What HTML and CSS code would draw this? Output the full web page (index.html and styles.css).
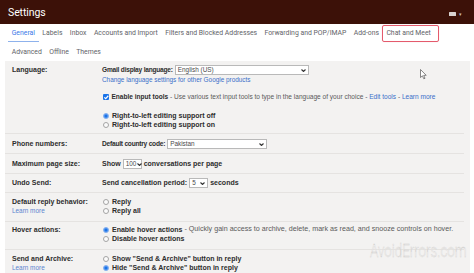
FILE: index.html
```html
<!DOCTYPE html>
<html>
<head>
<meta charset="utf-8">
<link rel="stylesheet" href="styles.css">
</head>
<body>
<header class="header">
  <span class="title">Settings</span>
  <span class="kbd"><span class="kbd-key"></span><span class="kbd-arrow">▾</span></span>
</header>
<nav class="tabs">
  <div class="tab-row">
    <span class="tab active">General</span>
    <span class="tab">Labels</span>
    <span class="tab">Inbox</span>
    <span class="tab">Accounts and Import</span>
    <span class="tab">Filters and Blocked Addresses</span>
    <span class="tab">Forwarding and POP/IMAP</span>
    <span class="tab">Add-ons</span>
    <span class="tab marked">Chat and Meet</span>
  </div>
  <div class="tab-row second">
    <span class="tab">Advanced</span>
    <span class="tab">Offline</span>
    <span class="tab">Themes</span>
  </div>
</nav>
<main class="panel">
  <section class="row row-lang">
    <div class="label">Language:</div>
    <div class="value">
      <div class="line"><b class="tight">Gmail display language:</b><span class="select sel-lang"><span>English (US)</span><svg class="chev" viewBox="0 0 5 3"><path d="M0.5 0.5 L2.5 2.5 L4.5 0.5"/></svg></span></div>
      <div class="line"><a class="link small">Change language settings for other Google products</a></div>
      <div class="line gap-check input-tools"><span class="check"><svg viewBox="0 0 6 6"><path d="M1.2 3.1 L2.5 4.3 L4.9 1.6"/></svg></span><b>Enable input tools</b><span class="muted">&nbsp;- Use various text input tools to type in the language of your choice -&nbsp;</span><a class="link">Edit tools</a><span class="muted">&nbsp;-&nbsp;</span><a class="link">Learn more</a></div>
      <div class="line9 gap-radio"><span class="radio on"></span><b>Right-to-left editing support off</b></div>
      <div class="line9"><span class="radio"></span><b>Right-to-left editing support on</b></div>
    </div>
  </section>
  <section class="row row-single">
    <div class="label">Phone numbers:</div>
    <div class="value"><div class="line"><b class="tight">Default country code:</b><span class="select sel-country"><span>Pakistan</span><svg class="chev" viewBox="0 0 5 3"><path d="M0.5 0.5 L2.5 2.5 L4.5 0.5"/></svg></span></div></div>
  </section>
  <section class="row row-single">
    <div class="label">Maximum page size:</div>
    <div class="value"><div class="line"><b>Show</b><span class="select sel-small"><span>100</span><svg class="chev" viewBox="0 0 5 3"><path d="M0.5 0.5 L2.5 2.5 L4.5 0.5"/></svg></span><b>conversations per page</b></div></div>
  </section>
  <section class="row row-undo">
    <div class="label">Undo Send:</div>
    <div class="value"><div class="line"><b>Send cancellation period:</b><span class="select sel-small"><span>5</span><svg class="chev" viewBox="0 0 5 3"><path d="M0.5 0.5 L2.5 2.5 L4.5 0.5"/></svg></span><b>seconds</b></div></div>
  </section>
  <section class="row row-reply">
    <div class="label"><div class="line9">Default reply behavior:</div><div class="line9"><a class="link light">Learn more</a></div></div>
    <div class="value">
      <div class="line9"><span class="radio"></span><b>Reply</b></div>
      <div class="line9"><span class="radio"></span><b>Reply all</b></div>
    </div>
  </section>
  <section class="row row-hover">
    <div class="label"><div class="line9">Hover actions:</div></div>
    <div class="value">
      <div class="line9"><span class="radio on"></span><b>Enable hover actions</b><span class="muted wide">&nbsp;- Quickly gain access to archive, delete, mark as read, and snooze controls on hover.</span></div>
      <div class="line9"><span class="radio"></span><b>Disable hover actions</b></div>
    </div>
  </section>
  <section class="row row-archive">
    <div class="label"><div class="line9">Send and Archive:</div><div class="line9"><a class="link light">Learn more</a></div></div>
    <div class="value">
      <div class="line9"><span class="radio"></span><b>Show "Send &amp; Archive" button in reply</b></div>
      <div class="line9"><span class="radio on"></span><b>Hide "Send &amp; Archive" button in reply</b></div>
    </div>
  </section>
  <svg class="cursor" viewBox="0 0 7 11"><path d="M0.5 0.5 L0.5 8.5 L2.4 6.8 L3.8 9.8 L5 9.3 L3.7 6.4 L6.2 6.3 Z"/></svg>
  <div class="watermark">AvoidErrors.com</div>
</main>
</body>
</html>
```
FILE: styles.css
```css
* { box-sizing: border-box; }
html, body { margin: 0; padding: 0; }
body {
  width: 474px;
  height: 273px;
  overflow: hidden;
  background: #fff;
  font-family: "Liberation Sans", Arial, sans-serif;
  font-size: 7px;
  color: #202124;
}
.header {
  height: 24px;
  background: #3c1108;
  display: flex;
  align-items: center;
  justify-content: space-between;
  padding: 0 10px 0 8px;
}
.title {
  font-family: Roboto, "Noto Sans", sans-serif;
  font-size: 10.5px;
  color: #fff;
  letter-spacing: -0.1px;
}
.kbd { display: flex; align-items: center; gap: 3px; margin-top: 3px; margin-right: 2px; }
.kbd-key { width: 7px; height: 4px; background: #d8d2d0; border-radius: 0.5px; }
.kbd-arrow { color: #cbbcb8; font-size: 5px; }

.tabs { font-family: Roboto, "Noto Sans", sans-serif; font-size: 6.85px; color: #5f6368; }
.tab-row { display: flex; height: 18px; padding-left: 8px; }
.tab-row.second { height: 18px; }
.tab {
  display: flex;
  align-items: center;
  padding: 1px 3.7px 0;
  border-bottom: 1.5px solid transparent;
  position: relative;
  white-space: nowrap;
}
.second .tab { border-bottom: 0; }
.tab.active { color: #3b78e7; border-bottom-color: #8eb2ec; }
.tab.marked::before {
  content: "";
  position: absolute;
  left: -1px; right: -4px; top: 1px; bottom: -0.5px;
  border: 1.5px solid #e45a6c;
  border-radius: 2px;
  box-shadow: 0 0 1px rgba(228,90,108,.4);
}

.panel {
  position: relative;
  margin: 1px 4px 0 5px;
  padding-right: 6px;
  background: #f3f2f1;
  height: 220px;
}
.row {
  display: grid;
  grid-template-columns: 97px 1fr;
  border-bottom: 1px solid #e5e3e1;
}
.label {
  padding-left: 7px;
  font-weight: 700;
  color: #2d2d2d;
  white-space: nowrap;
}
.value { white-space: nowrap; }
.line { height: 10px; line-height: 10px; display: flex; align-items: center; }
.line9 { height: 9px; line-height: 9px; display: flex; align-items: center; }
.label .line, .label .line9 { display: block; }
b { font-weight: 700; color: #2d2d2d; }
b.tight { font-size: 6.6px; letter-spacing: -0.22px; }
.muted { color: #5a5a5a; }
.muted.wide { font-size: 7.15px; }
.link { color: #3a6fc9; }
.link.small { font-size: 6.4px; }
.link.light { color: #5b86d0; font-weight: 400; font-size: 6.4px; }
.input-tools { font-size: 6.55px; }

.row-lang { padding: 4px 0 4px; }
.row-lang .label { line-height: 10px; }
.gap-check { margin-top: 7px; }
.gap-radio { margin-top: 9px; }
.row-single { padding: 5px 0 4px; }
.row-single .label, .row-undo .label { line-height: 10px; }
.row-undo { padding: 4px 0 4px; }
.row-reply { padding: 4px 0 6px; }
.row-hover { padding: 3px 0 6px; }
.row-archive { padding: 4px 0 0; border-bottom: 0; }

.select {
  display: inline-flex;
  align-items: center;
  justify-content: space-between;
  height: 10px;
  margin: 0 2px;
  padding: 0 2px 0 2px;
  background: #fff;
  border: 1px solid #b9b9b9;
  font-weight: 400;
  color: #4a4a4a;
  font-size: 6.4px;
  line-height: 8px;
}
.sel-lang { width: 134px; }
.sel-country { width: 100px; }
.sel-small { width: 19px; gap: 1px; }
.chev { width: 5px; height: 3px; flex: none; }
.chev path { fill: none; stroke: #333; stroke-width: 1.1; }

.check {
  width: 6.5px; height: 6.5px;
  background: #1a73e8;
  border-radius: 1px;
  margin: 0 2.5px 0 0.5px;
  display: inline-flex;
}
.check svg { width: 6.5px; height: 6.5px; }
.check path { fill: none; stroke: #fff; stroke-width: 1.1; }

.radio {
  width: 6px; height: 6px;
  border-radius: 50%;
  border: 1px solid #a4a4a4;
  background: #fbfbfb;
  margin: 0 3px 0 1px;
  flex: none;
}
.radio.on {
  border-color: #8db5ef;
  background: #1a73e8;
  box-shadow: inset 0 0 0 0.5px #5d9bf0;
}

.cursor {
  position: absolute;
  left: 415px; top: 8px;
  width: 7px; height: 11px;
}
.cursor path { fill: #fff; stroke: #555; stroke-width: 0.7; stroke-linejoin: round; }
.watermark {
  position: absolute;
  left: 365px; top: 179px;
  font-family: Roboto, sans-serif;
  font-weight: 300;
  font-size: 18px;
  white-space: nowrap;
  transform: scaleX(0.74);
  transform-origin: left top;
  color: rgba(255,255,255,0.8);
  -webkit-text-stroke: 0.4px #d0cecc;
}
```
